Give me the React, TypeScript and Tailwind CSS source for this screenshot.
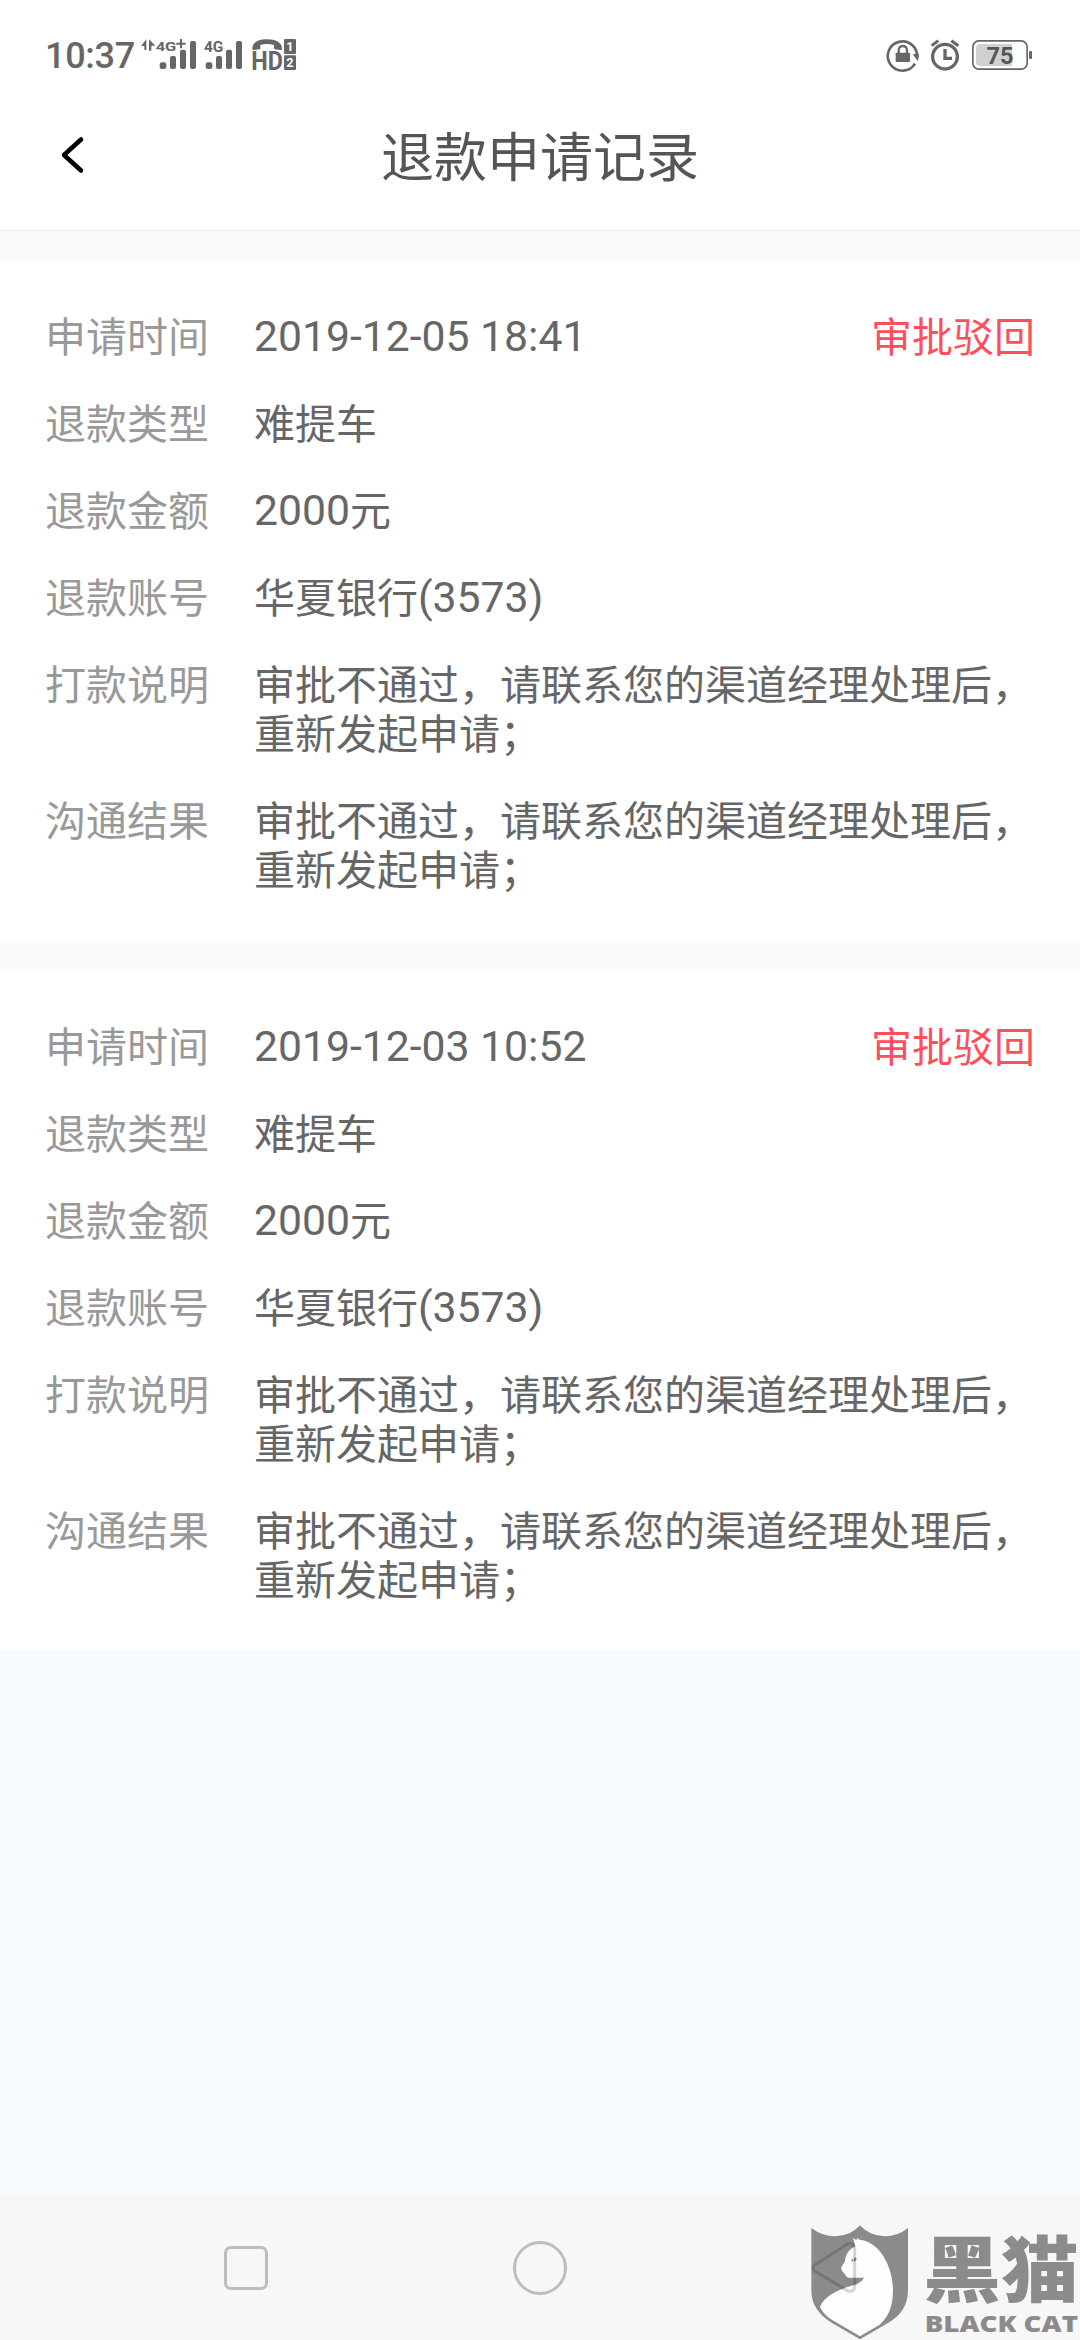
type RefundRecord = {
  id: number;
  time: string;
  status: string;
  type: string;
  amount: string;
  account: string;
  payNote: string;
  result: string;
};

const NOTE = "审批不通过，请联系您的渠道经理处理后，重新发起申请；";

const records: RefundRecord[] = [
  { id: 1, time: "2019-12-05 18:41", status: "审批驳回", type: "难提车", amount: "2000元", account: "华夏银行(3573)", payNote: NOTE, result: NOTE },
  { id: 2, time: "2019-12-03 10:52", status: "审批驳回", type: "难提车", amount: "2000元", account: "华夏银行(3573)", payNote: NOTE, result: NOTE },
];

const SignalIcons = () => (
  <svg className="w-[160px] h-[36px] ml-[5px] overflow-visible font-['Roboto',sans-serif]" viewBox="330 51 480 108" fill="#666666">
    <path d="M349 58V90H343V78H333ZM357 58L376 77H364V92H357Z" />
    <text x="377" y="92" fontSize="41" fontWeight="700" textLength="62" lengthAdjust="spacingAndGlyphs">4G</text>
    <path d="M439 68H450V57H456V68H467V74H456V85H450V74H439Z" />
    <rect x="389" y="127" width="20" height="20" rx="7" />
    <rect x="420" y="108" width="18" height="39" rx="6" />
    <rect x="450" y="89" width="18" height="58" rx="6" />
    <rect x="480" y="63" width="18" height="84" rx="6" />
    <text x="522" y="95" fontSize="43" fontWeight="700" textLength="58" lengthAdjust="spacingAndGlyphs">4G</text>
    <rect x="527" y="127" width="20" height="20" rx="7" />
    <rect x="558" y="108" width="18" height="39" rx="6" />
    <rect x="588" y="89" width="18" height="58" rx="6" />
    <rect x="618" y="63" width="18" height="84" rx="6" />
    <path d="M667 87C666 68 684 58 711 58S757 68 756 87Q756 91 751 90L735 88Q731 87 732 82V75Q711 69 691 75V82Q692 87 688 88L672 90Q667 91 667 87Z" />
    <text x="664" y="150" fontSize="80" fontWeight="700" textLength="95" lengthAdjust="spacingAndGlyphs">HD</text>
    <rect x="762" y="57" width="36" height="45" rx="4" />
    <rect x="762" y="106" width="36" height="44" rx="4" />
    <text x="780" y="93" fontSize="38" fontWeight="700" fill="#fff" textAnchor="middle">1</text>
    <text x="780" y="141" fontSize="38" fontWeight="700" fill="#fff" textAnchor="middle">2</text>
  </svg>
);

const DeviceIcons = () => (
  <svg className="w-[150px] h-[36px] overflow-visible font-['Roboto',sans-serif]" viewBox="75 51 450 108" fill="none" stroke="#666666">
    {/* rotation lock */}
    <path d="M165 131A44 44 0 1 1 171 114" strokeWidth="8" />
    <path d="M158 103L177 101L174 124Z" fill="#666666" stroke="none" />
    <rect x="107" y="98" width="43" height="28" rx="2" fill="#666666" stroke="none" />
    <path d="M116 99V90A12.500 12 0 0 1 141 90V99" strokeWidth="7" />
    {/* alarm */}
    <circle cx="255" cy="110" r="37" strokeWidth="10" />
    <path d="M255 87V115H276" strokeWidth="10" />
    <path d="M215 77L235 62M274 62L295 77" strokeWidth="9" />
    {/* battery */}
    <rect x="338.500" y="62.500" width="163" height="85" rx="18" strokeWidth="5" />
    <path d="M362 72H456V138H362Q348 138 348 125V85Q348 72 362 72Z" fill="#d0d0d0" stroke="none" />
    <rect x="507" y="93" width="9" height="24" rx="3" fill="#666666" stroke="none" />
    <text x="420" y="131" fontSize="71" fontWeight="700" fill="#555555" stroke="none" textAnchor="middle">75</text>
  </svg>
);

const StatusBar = () => (
  <div className="flex h-[110px] items-center justify-between pl-[45px] pr-[45px]">
    <div className="flex items-center">
      <span className="w-[90px] pt-[2px] text-[36px] leading-none text-[#666666] whitespace-nowrap font-medium tracking-[-0.3px]">10:37</span>
      <SignalIcons />
    </div>
    <DeviceIcons />
  </div>
);

const Header = () => (
  <header className="flex h-[121px] items-start border-b border-[#e3ebf1]">
    <button className="w-[120px] pl-[58px] pt-[25px]">
      <svg className="h-[40px] w-[30px]" viewBox="0 0 30 40" fill="none" stroke="#000" strokeWidth="4.500" strokeLinecap="round" strokeLinejoin="round">
        <path d="M23 4.500L6 20L23 35.500" />
      </svg>
    </button>
    <h1 className="flex-1 pt-[9px] text-center text-[53px] leading-[80px] text-[#555555]">退款申请记录</h1>
    <div className="w-[120px]" />
  </header>
);

// latin runs are set slightly larger than the chinese text around them
const MixedText = ({ text }: { text: string }) => (
  <>
    {text.split(/([\x20-\x7e]+)/).filter(Boolean).map((part, index) =>
      /^[\x20-\x7e]+$/.test(part) ? (
        <span key={index} className="relative -top-px text-[42.7px] leading-none">{part}</span>
      ) : (
        part
      )
    )}
  </>
);

const Row = ({ label, value, status }: { label: string; value: string; status?: string }) => (
  <div className="flex pr-[45px] text-[41px] leading-[49px]">
    <span className="w-[209px] shrink-0 text-[#999999]">{label}</span>
    <span className="flex-1 text-[#666666]"><MixedText text={value} /></span>
    {status && <span className="shrink-0 text-[#ff4f5e]">{status}</span>}
  </div>
);

const RecordCard = ({ record }: { record: RefundRecord }) => (
  <section className="flex h-[680px] flex-col gap-[38px] bg-white pl-[45px] pt-[53px]">
    <Row label="申请时间" value={record.time} status={record.status} />
    <Row label="退款类型" value={record.type} />
    <Row label="退款金额" value={record.amount} />
    <Row label="退款账号" value={record.account} />
    <Row label="打款说明" value={record.payNote} />
    <Row label="沟通结果" value={record.result} />
  </section>
);

const BlackCatLogo = () => (
  <svg className="absolute bottom-0 right-0 h-[117px] w-[270px] overflow-visible" viewBox="90 129 810 351" fill="#8c8a8b">
    <path d="M94 144Q128 169 165 169Q212 168 240 136Q268 168 315 169Q352 169 384 144V330C384 375 364 405 325 428L240 478L155 428C116 403 94 375 94 330Z" />
    <path d="M219 174L229 180L232 174L238 179C298 183 339 260 339 330C339 380 325 411 299 434L240 469L158 421C138 408 127 396 120 380C135 345 180 327 222 315Q243 309 252 293H207Q198 292 195 283Q185 275 183 264L195 244C196 224 208 207 226 199Z" fill="#fdfdfd" />
    <path d="M213 240L220 235L217 247ZM223 232L230 235L227 243L221 245Z" />
    <path d="M204 191L103 256Q94 264 103 272L204 333Q223 338 224 320V205Q222 188 204 191Z" fill="none" stroke="#000" strokeOpacity="0.16" strokeWidth="9" />
    <text className="font-['Noto_Sans_CJK_SC',sans-serif]" x="430" y="348" fontSize="214" fontWeight="900" textLength="466" lengthAdjust="spacingAndGlyphs">黑猫</text>
    <text className="font-['Open_Sans',sans-serif]" x="434" y="457" fontSize="68" fontWeight="800" textLength="460" lengthAdjust="spacingAndGlyphs">BLACK CAT</text>
  </svg>
);

const NavBar = () => (
  <nav className="relative flex h-[144px] items-center bg-[#f7f7f7]">
    <div className="ml-[224px] h-[44px] w-[44px] rounded-[7px] border-3 border-[#bdbdbd]" />
    <div className="ml-[245px] h-[54px] w-[54px] rounded-full border-3 border-[#bdbdbd]" />
    <BlackCatLogo />
  </nav>
);

const App = () => {
  return (
    <div className="flex h-[2340px] w-[1080px] flex-col overflow-hidden bg-[#f5fafe] font-['Roboto','Noto_Sans_CJK_SC',sans-serif]">
      <div className="bg-white">
        <StatusBar />
        <Header />
      </div>
      <main className="flex flex-1 flex-col">
        <div className="flex flex-col gap-[30px] bg-[#fafafa] pt-[30px]">
          {records.map((record) => (
            <RecordCard key={record.id} record={record} />
          ))}
        </div>
      </main>
      <NavBar />
    </div>
  );
};

export default App;
